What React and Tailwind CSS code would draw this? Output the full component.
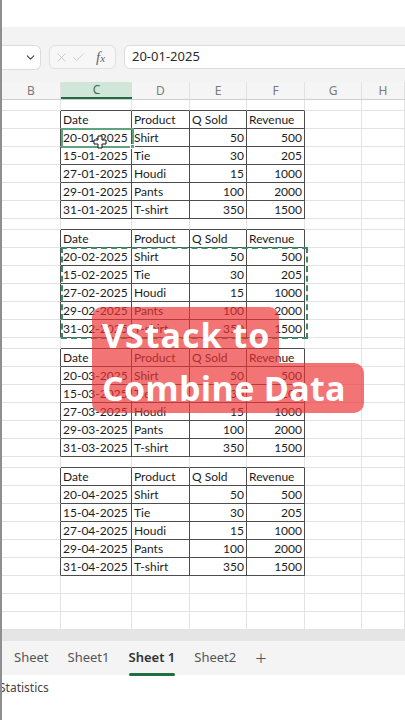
import { ChevronDown, X, Check } from "lucide-react";

const colW = ["w-[59px]", "w-[71px]", "w-[58px]", "w-[57px]", "w-[58px]", "w-[57px]", "w-[43px]"];
const letters = ["B", "C", "D", "E", "F", "G", "H"];

const items = [
  ["20", "Shirt", 50, 500],
  ["15", "Tie", 30, 205],
  ["27", "Houdi", 15, 1000],
  ["29", "Pants", 100, 2000],
  ["31", "T-shirt", 350, 1500],
];

const months = ["01", "02", "03", "04"];

// build the visible sheet rows
const rows = [];
months.forEach((m) => {
  rows.push({ kind: "above", h: "h-[11px]" });
  rows.push({ kind: "table", h: "h-[18px]", cells: ["Date", "Product", "Q Sold", "Revenue"], head: true });
  items.forEach((r) => {
    rows.push({ kind: "table", h: "h-[18px]", cells: [`${r[0]}-${m}-2025`, r[1], r[2], r[3]] });
  });
});
rows.push({ kind: "blank", h: "h-[18px]" });
rows.push({ kind: "blank", h: "h-[18px]" });
rows.push({ kind: "blank", h: "h-[18px]" });

const cellBorder = (kind, col) => {
  const inTable = col >= 1 && col <= 4;
  if (kind === "table") {
    if (col === 0) return "border-r border-b border-r-[#4d4d4d] border-b-[#e3e3e3]";
    if (inTable) return "border-r border-b border-[#4d4d4d]";
  }
  if (kind === "above" && inTable) return "border-r border-b border-r-[#e3e3e3] border-b-[#4d4d4d]";
  return "border-r border-b border-[#e3e3e3]";
};

const SheetRow = ({ row }) => (
  <div className={`flex ${row.h}`}>
    {colW.map((w, i) => {
      let content = null;
      let align = "justify-start pl-[2px]";
      if (row.cells && i >= 1 && i <= 4) {
        content = row.cells[i - 1];
        if (!row.head && typeof content === "number") align = "justify-end pr-[2px]";
      }
      return (
        <div key={i} className={`${w} shrink-0 flex items-center whitespace-nowrap overflow-hidden ${align} ${cellBorder(row.kind, i)} text-[12px] leading-none text-[#1c1c1c]`}>
          {content}
        </div>
      );
    })}
  </div>
);

const Cursor = () => (
  <svg width="14" height="14" viewBox="0 0 14 14">
    <path d="M5 1h4v4h4v4h-4v4h-4v-4h-4v-4h4z" fill="#fff" stroke="#111" strokeWidth="1" />
  </svg>
);

export default function App() {
  return (
    <div className="relative w-[405px] h-[720px] overflow-hidden bg-white border-l-2 border-[#8f8f8f]" style={{ fontFamily: "Lato, 'Noto Sans', sans-serif" }}>
      <div className="h-[27px] bg-white" />

      {/* formula bar */}
      <div className="h-[55px] bg-[#f3f3f3] flex items-start pt-[18px] font-['Noto_Sans',sans-serif]">
        <div className="w-[39px] h-[25px] bg-white border border-[#dcdcdc] border-l-0 rounded-r-md flex items-center justify-end pr-[3px]">
          <ChevronDown size={13} strokeWidth={2} className="text-[#444]" />
        </div>
        <div className="ml-[8px] w-[67px] h-[24px] bg-[#f7f7f7] border border-[#e0e0e0] rounded-md flex items-center pl-[4px] gap-[2px]">
          <X size={15} strokeWidth={1.3} className="text-[#c2c2c2]" />
          <Check size={15} strokeWidth={1.3} className="text-[#c2c2c2]" />
          <span className="ml-[8px] text-[15px] italic text-[#666] font-['Liberation_Serif',serif] leading-none">
            f<span className="text-[11px]">x</span>
          </span>
        </div>
        <div className="ml-[8px] flex-1 mr-[-10px] h-[24px] bg-white border border-[#dcdcdc] rounded-md flex items-center pl-[7px] text-[13px] text-[#2b2b2b]">
          20-01-2025
        </div>
      </div>

      {/* column headers */}
      <div className="flex h-[18px] bg-[#f5f5f5] border-b border-[#cfcfcf] font-['Noto_Sans',sans-serif]">
        {colW.map((w, i) => (
          <div
            key={i}
            className={`${w} shrink-0 flex items-center justify-center text-[12px] ${
              i === 1 ? "bg-[#cfe6d8] border-b-2 border-[#1f6e43] text-[#3f6b52]" : "text-[#7a7a7a] border-r border-[#e2e2e2]"
            }`}
          >
            {letters[i]}
          </div>
        ))}
      </div>

      {/* grid */}
      <div>
        {rows.map((r, i) => (
          <SheetRow key={i} row={r} />
        ))}
      </div>

      {/* sheet tabs */}
      <div className="h-[11px] bg-[#e5e5e5]" />
      <div className="h-[34px] bg-[#f4f4f4] flex items-center pl-[12px] gap-[19px] text-[13px] text-[#555] font-['Noto_Sans',sans-serif]">
        <span>Sheet</span>
        <span>Sheet1</span>
        <span className="relative font-semibold text-[#333]">
          Sheet 1
          <span className="absolute left-0 right-0 bottom-[-8px] h-[3px] rounded-full bg-[#1f6e43]" />
        </span>
        <span>Sheet2</span>
        <span className="text-[20px] font-light leading-none text-[#555]">+</span>
      </div>
      <div className="h-[45px] bg-white pt-[4px] ml-[-3px] text-[12px] text-[#444] font-['Noto_Sans',sans-serif]">Statistics</div>

      {/* active cell */}
      <div className="absolute left-[59px] top-[128px] w-[73px] h-[20px] border-2 border-[#5fa47f]" />
      <div className="absolute left-[128px] top-[144px] w-[5px] h-[5px] bg-[#5fa47f] border border-white" />
      <div className="absolute left-[91px] top-[135px]">
        <Cursor />
      </div>

      {/* copy marquee */}
      <div className="absolute left-[59px] top-[247px] w-[247px] h-[92px] border-2 border-dashed border-[#3d8a66]" />

      {/* caption */}
      <div className="absolute left-[90px] top-[307px] font-['Open_Sans',sans-serif] font-bold text-white whitespace-nowrap">
        <div className="w-[187px] h-[56px] rounded-t-[10px] bg-[rgba(238,50,50,0.68)] flex items-center pl-[10px] text-[34px] leading-none tracking-[1px]">
          VStack to
        </div>
        <div className="w-[272px] h-[50px] rounded-b-[10px] rounded-tr-[10px] bg-[rgba(238,50,50,0.68)] flex items-center pl-[10px] text-[34px] leading-none tracking-[0.3px]">
          Combine Data
        </div>
      </div>
    </div>
  );
}
